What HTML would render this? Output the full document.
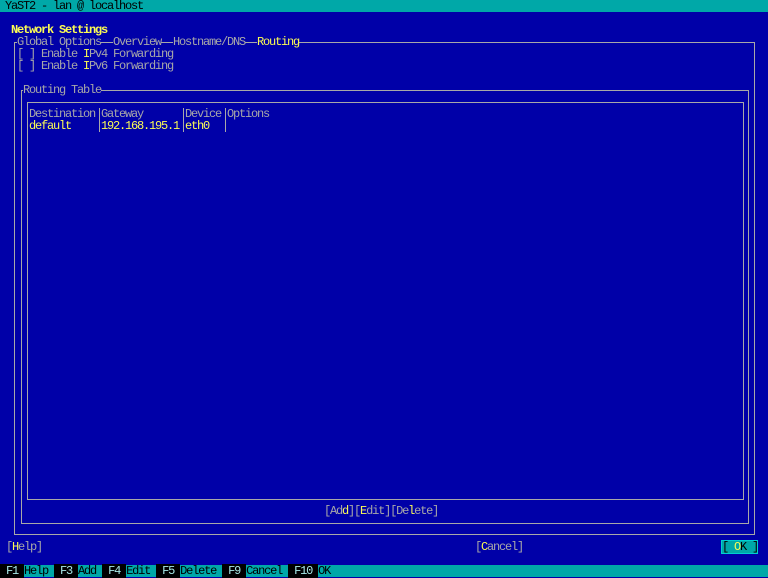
<!DOCTYPE html>
<html><head><meta charset="utf-8"><style>
html,body{margin:0;padding:0}
body{width:768px;height:577px;background:#0000a8;position:relative;overflow:hidden;font-family:"Liberation Mono",monospace;font-size:12px;letter-spacing:-1.2px;color:#a8a8a8}
.t{position:absolute;white-space:pre;line-height:12px;height:12px}
.y{color:#fcfc54}
.b{font-weight:bold}
.box{position:absolute;border:1px solid #a8a8a8}
.bg{background:#0000a8}
.vl{position:absolute;width:1px;background:#a8a8a8}
</style></head><body>
<div class="t" style="left:0;top:0;width:768px;background:#00a8a8;color:#000;padding-left:5px">YaST2 - lan @ localhost</div>
<div class="t y b" style="left:11px;top:24px">Network Settings</div>
<div class="box" style="left:14px;top:42px;width:739px;height:491px"></div>
<div class="t bg" style="left:17px;top:36px">Global Options</div>
<div class="t bg" style="left:113px;top:36px">Overview</div>
<div class="t bg" style="left:173px;top:36px">Hostname/DNS</div>
<div class="t bg y" style="left:257px;top:36px">Routing</div>
<div class="t" style="left:17px;top:48px">[ ] Enable <span class="y">I</span>Pv4 Forwarding</div>
<div class="t" style="left:17px;top:60px">[ ] Enable <span class="y">I</span>Pv6 Forwarding</div>
<div class="box" style="left:21px;top:90px;width:726px;height:432px"></div>
<div class="t bg" style="left:23px;top:84px">Routing Table</div>
<div class="box" style="left:27px;top:102px;width:715px;height:396px"></div>
<div class="vl" style="left:99px;top:108px;height:24px"></div>
<div class="vl" style="left:183px;top:108px;height:24px"></div>
<div class="vl" style="left:225px;top:108px;height:24px"></div>
<div class="t" style="left:29px;top:108px">Destination</div>
<div class="t" style="left:101px;top:108px">Gateway</div>
<div class="t" style="left:185px;top:108px">Device</div>
<div class="t" style="left:227px;top:108px">Options</div>
<div class="t y" style="left:29px;top:120px">default</div>
<div class="t y" style="left:101px;top:120px">192.168.195.1</div>
<div class="t y" style="left:185px;top:120px">eth0</div>
<div class="t" style="left:324px;top:505px">[Ad<span class="y">d</span>][<span class="y">E</span>dit][De<span class="y">l</span>ete]</div>
<div class="t" style="left:6px;top:541px">[<span class="y">H</span>elp]</div>
<div class="t" style="left:475px;top:541px">[<span class="y">C</span>ancel]</div>
<div class="t" style="left:722px;top:541px;width:35px;background:#00a8a8;color:#000;outline:1px solid #00d0d0">[ <span class="y">O</span>K ]</div>
<div class="t" style="left:0;top:565px;width:768px;background:#00a8a8;color:#000"><span style="background:#000;color:#a8e8e8"> F1 </span>Help <span style="background:#000;color:#a8e8e8"> F3 </span>Add <span style="background:#000;color:#a8e8e8"> F4 </span>Edit <span style="background:#000;color:#a8e8e8"> F5 </span>Delete <span style="background:#000;color:#a8e8e8"> F9 </span>Cancel <span style="background:#000;color:#a8e8e8"> F10 </span>OK</div>
</body></html>
